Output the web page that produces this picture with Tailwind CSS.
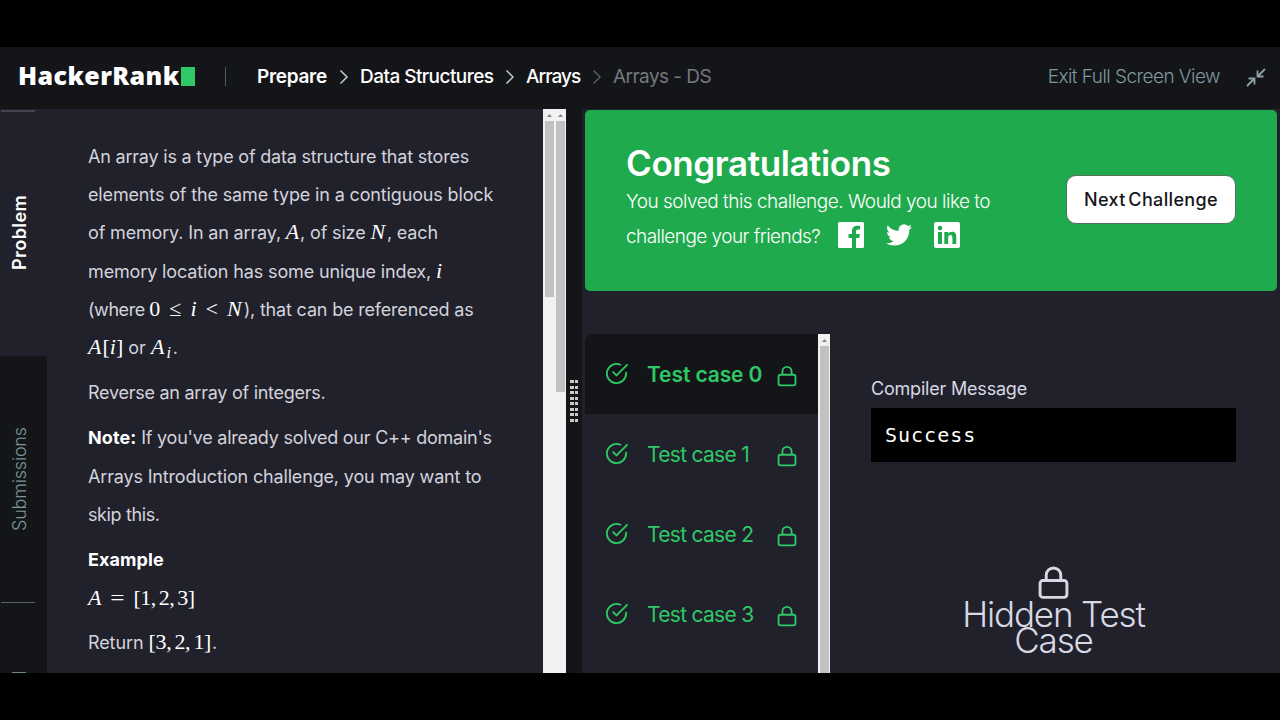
<!DOCTYPE html>
<html lang="en">

<head>
    <meta charset="UTF-8">
    <meta name="viewport" content="width=device-width, initial-scale=1.0">
    <title>Arrays - DS | HackerRank</title>
    <script src="https://cdn.jsdelivr.net/npm/@tailwindcss/browser@4"></script>
</head>

<body class="bg-black h-[720px] w-[1280px] overflow-hidden py-[47px] font-['Inter',sans-serif]">
    <!-- ICONS -->
    <svg class="hidden">
        <symbol id="lock" viewBox="0 0 24 24" fill="none" stroke="currentColor" stroke-width="2">
            <rect x="2.800" y="10.600" width="18.400" height="11.600" rx="2" />
            <path d="M7 10.600V7a5 5 0 0 1 10 0v3.600" />
        </symbol>
        <symbol id="check" viewBox="0 0 24 24" fill="none" stroke="currentColor" stroke-width="1.900" stroke-linecap="round" stroke-linejoin="round">
            <path d="M22 11.08V12a10 10 0 1 1-5.93-9.14" />
            <path d="M23 3 12 14l-3.500-3.500" />
        </symbol>
        <symbol id="chevron" viewBox="0 0 10 16" fill="none" stroke="currentColor" stroke-width="1.500">
            <path d="m1.500 1.500 6.500 6.500-6.500 6.500" />
        </symbol>
    </svg>

    <div class="flex h-[626px] flex-col overflow-hidden bg-[#141519]">
        <!-- HEADER -->
        <header class="flex h-[62px] shrink-0 items-center whitespace-nowrap pb-[3px] text-[19px] text-white">
            <a class="flex w-[206px] items-center pb-[1px] pl-[18px]">
                <span class="w-[163px] pb-[1px] font-['Open_Sans'] text-[25px] leading-none font-extrabold tracking-[0.400px]">HackerRank</span>
                <span class="h-[19px] w-[14px] bg-[#2ec866]"></span>
            </a>
            <span class="ml-[19px] h-[19px] w-px bg-[#4a5a5e]"></span>
            <nav class="flex items-center">
                <a class="ml-[31px] w-[82px] pt-[2px] font-semibold tracking-[-0.300px]">Prepare</a>
                <svg class="h-4 w-[10px] text-[#c5cbcd]"><use href="#chevron" /></svg>
                <a class="ml-[11px] w-[145px] pt-[2px] font-medium tracking-[-0.550px]">Data Structures</a>
                <svg class="h-4 w-[10px] text-[#c5cbcd]"><use href="#chevron" /></svg>
                <a class="ml-[11px] w-[66px] pt-[2px] font-medium tracking-[-0.950px]">Arrays</a>
                <svg class="h-4 w-[10px] text-[#55595d]"><use href="#chevron" /></svg>
                <span class="ml-[11px] pt-[2px] tracking-[-0.550px] text-[#74797d]">Arrays - DS</span>
            </nav>
            <a class="mr-[26px] ml-auto pt-[2px] font-light tracking-[-0.550px] text-[#7d999d]">Exit Full Screen View</a>
            <svg class="mt-[2px] mr-[14px] h-[19px] w-[20px] text-[#8ba3a5]" viewBox="0 0 20 19" fill="none" stroke="currentColor" stroke-width="1.800">
                <path d="M19 1l-7.500 7.500M11.500 2.500v6h6M1 18l7.500-7.500M2.500 10.500h6v6" />
            </svg>
        </header>

        <main class="flex min-h-0 flex-1">
            <!-- SIDE TABS -->
            <aside class="flex w-[47px] shrink-0 flex-col">
                <div class="flex h-[247px] shrink-0 flex-col bg-[#21212b]">
                    <span class="mt-[1px] ml-[1px] h-[2px] w-[34px] bg-[#44454f]"></span>
                    <span class="mt-[80px] ml-[8px] h-[80px] rotate-180 text-[18px] leading-[24px] font-semibold tracking-[0.450px] text-white [writing-mode:vertical-rl]"><span class="inline-block pt-[2px]">Problem</span></span>
                </div>
                <div class="flex h-[246px] shrink-0 flex-col">
                    <span class="mt-[71px] ml-[8px] h-[104px] rotate-180 text-[18px] leading-[24px] font-light tracking-[-0.200px] text-[#78969a] [writing-mode:vertical-rl]">Submissions</span>
                </div>
                <span class="ml-[1px] h-px w-[34px] shrink-0 bg-[#5b6064]"></span>
                <span class="mt-[69px] ml-[12px] h-px w-[14px] bg-[#6b8588]"></span>
            </aside>

            <!-- PROBLEM STATEMENT -->
            <section class="w-[496px] shrink-0 overflow-hidden bg-[#21212b] pt-[29px] pl-[41px] text-[18px] leading-[38.200px] whitespace-nowrap text-[#d3d3dd]">
                <p class="mb-[7px]">
                    <span class="block tracking-[-0.200px]">An array is a type of data structure that stores</span>
                    <span class="block tracking-[-0.150px]">elements of the same type in a contiguous block</span>
                    <span class="block tracking-[-0.160px]">of memory. In an array, <i class="mr-[1px] font-['Liberation_Serif'] text-[22px] leading-none text-white">A</i>, of size <i class="mr-[2px] font-['Liberation_Serif'] text-[22px] leading-none text-white">N</i>, each</span>
                    <span class="block tracking-[-0.140px]">memory location has some unique index, <i class="font-['Liberation_Serif'] text-[22px] leading-none text-white">i</i></span>
                    <span class="block tracking-[-0.180px]"><span class="tracking-[-0.450px]">(where </span><span class="mr-[2px] font-['Liberation_Serif'] text-[22px] leading-none tracking-normal [word-spacing:3.500px] text-white">0 ≤ <i>i</i> &lt; <i>N</i></span>), that can be referenced as</span>
                    <span class="block"><span class="font-['Liberation_Serif'] text-[22px] leading-none text-white"><i class="mr-[1px]">A</i>[<i>i</i>]</span> or <span class="mr-[2px] font-['Liberation_Serif'] text-[22px] leading-none text-white"><i class="mr-[2px]">A</i><i class="relative top-[4px] text-[16px]">i</i></span>.</span>
                </p>
                <p class="mb-[7px] tracking-[-0.260px]">Reverse an array of integers.</p>
                <p class="mb-[7px]">
                    <span class="block tracking-[-0.240px]"><b class="font-bold tracking-[0.100px] text-white">Note:</b> If you've already solved our C++ domain's</span>
                    <span class="block tracking-[-0.160px]">Arrays Introduction challenge, you may want to</span>
                    <span class="block tracking-[-0.380px]">skip this.</span>
                </p>
                <p class="font-bold tracking-[0.100px] text-white">Example</p>
                <p class="mb-[7px] font-['Liberation_Serif'] text-[22px] text-white"><i>A</i><span class="mr-[8px] ml-[9px] inline-block w-[15px] scale-x-115 text-center">=</span><span class="[word-spacing:-2px] tracking-[-0.500px]">[1, 2, 3]</span></p>
                <p><span class="tracking-[-0.100px]">Return</span> <span class="mr-[1px] font-['Liberation_Serif'] text-[22px] leading-none [word-spacing:-2px] tracking-[-0.350px] text-white">[3, 2, 1]</span>.</p>
            </section>

            <!-- SCROLLBARS -->
            <div class="flex w-[23px] shrink-0 bg-[#f1f1f1] pl-[1px]">
                <div class="flex w-[10px] flex-col items-center">
                    <svg class="h-[12px] w-[5px] shrink-0" viewBox="0 0 5 12"><path d="M0 8 2.500 5 5 8z" fill="#888" /></svg>
                    <span class="h-[176px] w-[9px] bg-[#c1c1c1]"></span>
                </div>
                <div class="ml-[2px] flex w-[9px] flex-col items-center">
                    <svg class="h-[12px] w-[5px] shrink-0" viewBox="0 0 5 12"><path d="M0 8 2.500 5 5 8z" fill="#888" /></svg>
                    <span class="h-[271px] w-[9px] bg-[#c1c1c1]"></span>
                </div>
            </div>

            <!-- RESIZE HANDLE -->
            <div class="w-[16px] shrink-0 pt-[271px] pl-[4px]">
                <div class="grid w-[8px] grid-cols-2 gap-x-[1px] gap-y-[2.500px]">
                    <i class="h-[3px] bg-[#c9c9c9]"></i><i class="h-[3px] bg-[#c9c9c9]"></i>
                    <i class="h-[3px] bg-[#c9c9c9]"></i><i class="h-[3px] bg-[#c9c9c9]"></i>
                    <i class="h-[3px] bg-[#c9c9c9]"></i><i class="h-[3px] bg-[#c9c9c9]"></i>
                    <i class="h-[3px] bg-[#c9c9c9]"></i><i class="h-[3px] bg-[#c9c9c9]"></i>
                    <i class="h-[3px] bg-[#c9c9c9]"></i><i class="h-[3px] bg-[#c9c9c9]"></i>
                    <i class="h-[3px] bg-[#c9c9c9]"></i><i class="h-[3px] bg-[#c9c9c9]"></i>
                    <i class="h-[3px] bg-[#c9c9c9]"></i><i class="h-[3px] bg-[#c9c9c9]"></i>
                    <i class="h-[3px] bg-[#c9c9c9]"></i><i class="h-[3px] bg-[#c9c9c9]"></i>
                </div>
            </div>

            <!-- RESULTS -->
            <section class="flex min-w-0 flex-1 flex-col bg-[#21212b] pl-[3px] whitespace-nowrap">
                <div class="mt-px mr-[3px] flex h-[181px] shrink-0 justify-between rounded-[5px] bg-[#1faa4d] pr-[41px] pl-[41px] text-white">
                    <div class="pt-[31px]">
                        <h1 class="text-[35px] leading-[44px] font-semibold tracking-[-0.400px]">Congratulations</h1>
                        <p class="-mt-px text-[19px] leading-[35px] font-light tracking-[-0.500px]">You solved this challenge. Would you like to</p>
                        <div class="flex items-start text-[19px] leading-[35px] font-light">
                            <span class="w-[212px] tracking-[-0.550px]">challenge your friends?</span>
                            <svg class="mt-[3px] size-[26px]" viewBox="0 0 26 26" fill="currentColor">
                                <path d="M1.500 0h23A1.500 1.500 0 0 1 26 1.500v23a1.500 1.500 0 0 1-1.500 1.500H18V16h3.300l.6-4H18V9.500c0-1.200.5-2 2-2h2.100V4c-.5-.1-1.500-.2-2.700-.2-3.200 0-5.400 1.900-5.400 5.300V12h-3.500v4H14v10H1.500A1.500 1.500 0 0 1 0 24.500v-23A1.500 1.500 0 0 1 1.500 0z" />
                            </svg>
                            <svg class="mt-[3px] ml-[22px] size-[26px]" viewBox="0 0 24 24" fill="currentColor">
                                <path d="M23.950 4.570a10 10 0 0 1-2.820.770 4.960 4.960 0 0 0 2.160-2.720c-.95.550-2 .950-3.130 1.180a4.920 4.920 0 0 0-8.380 4.480C7.690 8.100 4.070 6.130 1.640 3.160a4.920 4.920 0 0 0 1.520 6.570 4.900 4.900 0 0 1-2.230-.61v.06c0 2.380 1.700 4.370 3.950 4.830a5 5 0 0 1-2.210.08 4.940 4.940 0 0 0 4.600 3.420A9.870 9.870 0 0 1 0 19.540a14 14 0 0 0 7.550 2.210c9.050 0 14-7.500 14-13.980 0-.21 0-.42-.02-.63a9.940 9.940 0 0 0 2.460-2.550z" />
                            </svg>
                            <svg class="mt-[3px] ml-[22px] size-[26px]" viewBox="0 0 26 26" fill="currentColor" fill-rule="evenodd">
                                <path d="M2 0h22a2 2 0 0 1 2 2v22a2 2 0 0 1-2 2H2a2 2 0 0 1-2-2V2a2 2 0 0 1 2-2zM4 10v12h4V10zM6 3.800a2.300 2.300 0 1 0 0 4.600 2.300 2.300 0 0 0 0-4.600zM10.300 10v12h3.900v-6c0-1.700.5-3 2.200-3s2 1.400 2 3.100V22h3.900v-6.800c0-3.300-.8-5.500-4.400-5.500-1.900 0-3.100.9-3.700 2V10z" />
                            </svg>
                        </div>
                    </div>
                    <button class="mt-[65px] h-[49px] w-[170px] rounded-[10px] border border-[#55705f] bg-white text-[18px] font-medium tracking-[0.350px] text-[#15161c] [word-spacing:-2.500px]">Next Challenge</button>
                </div>

                <div class="mt-[43px] flex min-h-0 flex-1 overflow-hidden">
                    <ul class="w-[233px] shrink-0 text-[21px] tracking-[-0.700px] text-[#2ec866]">
                        <li class="flex h-[80px] items-center rounded-tl-[8px] bg-[#141519] pl-[20px] font-semibold tracking-[-0.100px]">
                            <svg class="-mt-px size-[23px]"><use href="#check" /></svg>
                            <span class="mt-[2px] ml-[19px] w-[129px]">Test case 0</span>
                            <svg class="mt-[4px] size-[22px]"><use href="#lock" /></svg>
                        </li>
                        <li class="flex h-[80px] items-center pl-[20px]">
                            <svg class="-mt-px size-[23px]"><use href="#check" /></svg>
                            <span class="mt-[2px] ml-[19px] w-[129px]">Test case 1</span>
                            <svg class="mt-[4px] size-[22px]"><use href="#lock" /></svg>
                        </li>
                        <li class="flex h-[80px] items-center pl-[20px]">
                            <svg class="-mt-px size-[23px]"><use href="#check" /></svg>
                            <span class="mt-[1px] ml-[19px] w-[129px]">Test case 2</span>
                            <svg class="mt-[4px] size-[22px]"><use href="#lock" /></svg>
                        </li>
                        <li class="flex h-[80px] items-center pl-[20px]">
                            <svg class="-mt-px size-[23px]"><use href="#check" /></svg>
                            <span class="mt-[1px] ml-[19px] w-[129px]">Test case 3</span>
                            <svg class="mt-[4px] size-[22px]"><use href="#lock" /></svg>
                        </li>
                    </ul>
                    <div class="flex w-[12px] shrink-0 flex-col items-center bg-[#f1f1f1]">
                        <svg class="h-[12px] w-[5px] shrink-0" viewBox="0 0 5 12"><path d="M0 8 2.500 5 5 8z" fill="#888" /></svg>
                        <span class="w-[9px] flex-1 bg-[#c1c1c1]"></span>
                    </div>
                    <div class="ml-[41px] w-[365px] text-[#d8d8e4]">
                        <h2 class="mt-[41px] text-[18px] leading-[28px] tracking-[-0.200px]">Compiler Message</h2>
                        <pre class="mt-[5px] h-[54px] bg-black pl-[14px] font-['DejaVu_Sans_Mono'] text-[20px] leading-[54px] tracking-[1px] text-white">Success</pre>
                        <div class="mt-[103px] flex flex-col items-center text-center text-[35px] leading-[26px] font-light tracking-[-1.150px]">
                            <svg class="size-[35px]"><use href="#lock" /></svg>
                            <p class="mt-px">Hidden Test<br>Case</p>
                        </div>
                    </div>
                </div>
            </section>
        </main>
    </div>
</body>

</html>
